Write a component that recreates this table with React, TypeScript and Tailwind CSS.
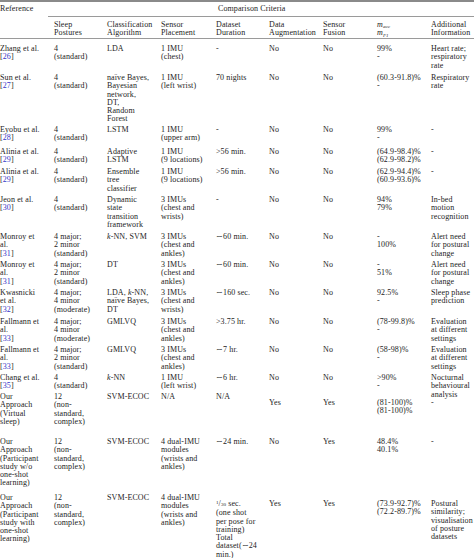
import type { ReactNode } from "react";

const cols = "grid grid-cols-[54px_53px_54px_55px_53px_54px_54px_54px_43px]";

function Cite({ n }: { n: number }) {
  return (
    <>
      [<span className="text-[#3434c8]">{n}</span>]
    </>
  );
}

const kNN = (
  <>
    <i>k</i>-NN
  </>
);

type Row = {
  h: number;
  cells: ReactNode[][];
  off?: Record<number, number>;
};

const rows: Row[] = [
  {
    h: 29,
    cells: [
      ["Zhang et al.", <Cite n={26} />],
      ["4", "(standard)"],
      ["LDA"],
      ["1 IMU", "(chest)"],
      ["-"],
      ["No"],
      ["No"],
      ["99%", "-"],
      ["Heart rate;", "respiratory", "rate"],
    ],
  },
  {
    h: 52,
    cells: [
      ["Sun et al.", <Cite n={27} />],
      ["4", "(standard)"],
      ["naïve Bayes,", "Bayesian", "network,", "DT,", "Random", "Forest"],
      ["1 IMU", "(left wrist)"],
      ["70 nights"],
      ["No"],
      ["No"],
      ["(60.3-91.8)%", "-"],
      ["Respiratory", "rate"],
    ],
  },
  {
    h: 22,
    cells: [
      ["Eyobu et al.", <Cite n={28} />],
      ["4", "(standard)"],
      ["LSTM"],
      ["1 IMU", "(upper arm)"],
      ["-"],
      ["No"],
      ["No"],
      ["99%", "-"],
      ["-"],
    ],
  },
  {
    h: 20,
    cells: [
      ["Alinia et al.", <Cite n={29} />],
      ["4", "(standard)"],
      ["Adaptive", "LSTM"],
      ["1 IMU", "(9 locations)"],
      [">56 min."],
      ["No"],
      ["No"],
      ["(64.9-98.4)%", "(62.9-98.2)%"],
      ["-"],
    ],
  },
  {
    h: 28,
    cells: [
      ["Alinia et al.", <Cite n={29} />],
      ["4", "(standard)"],
      ["Ensemble", "tree", "classifier"],
      ["1 IMU", "(9 locations)"],
      [">56 min."],
      ["No"],
      ["No"],
      ["(62.9-94.4)%", "(60.9-93.6)%"],
      ["-"],
    ],
  },
  {
    h: 37,
    cells: [
      ["Jeon et al.", <Cite n={30} />],
      ["4", "(standard)"],
      ["Dynamic", "state", "transition", "framework"],
      ["3 IMUs", "(chest and", "wrists)"],
      ["-"],
      ["No"],
      ["No"],
      ["94%", "79%"],
      ["In-bed", "motion", "recognition"],
    ],
  },
  {
    h: 28,
    cells: [
      ["Monroy et", "al.", <Cite n={31} />],
      ["4 major;", "2 minor", "(standard)"],
      [<>{kNN}, SVM</>],
      ["3 IMUs", "(chest and", "ankles)"],
      ["∼60 min."],
      ["No"],
      ["No"],
      ["-", "100%"],
      ["Alert need", "for postural", "change"],
    ],
  },
  {
    h: 28,
    cells: [
      ["Monroy et", "al.", <Cite n={31} />],
      ["4 major;", "2 minor", "(standard)"],
      ["DT"],
      ["3 IMUs", "(chest and", "ankles)"],
      ["∼60 min."],
      ["No"],
      ["No"],
      ["-", "51%"],
      ["Alert need", "for postural", "change"],
    ],
  },
  {
    h: 29,
    cells: [
      ["Kwasnicki", "et al.", <Cite n={32} />],
      ["4 major;", "4 minor", "(moderate)"],
      [<>LDA, {kNN},</>, "naïve Bayes,", "DT"],
      ["3 IMUs", "(chest and", "wrists)"],
      ["∼160 sec."],
      ["No"],
      ["No"],
      ["92.5%", "-"],
      ["Sleep phase", "prediction"],
    ],
  },
  {
    h: 28,
    cells: [
      ["Fallmann et", "al.", <Cite n={33} />],
      ["4 major;", "4 minor", "(moderate)"],
      ["GMLVQ"],
      ["3 IMUs", "(chest and", "ankles)"],
      [">3.75 hr."],
      ["No"],
      ["No"],
      ["(78-99.8)%", "-"],
      ["Evaluation", "at different", "settings"],
    ],
  },
  {
    h: 28,
    cells: [
      ["Fallmann et", "al.", <Cite n={33} />],
      ["4 major;", "2 minor", "(standard)"],
      ["GMLVQ"],
      ["3 IMUs", "(chest and", "ankles)"],
      ["∼7 hr."],
      ["No"],
      ["No"],
      ["(58-98)%", "-"],
      ["Evaluation", "at different", "settings"],
    ],
  },
  {
    h: 19,
    cells: [
      ["Chang et al.", <Cite n={35} />],
      ["4", "(standard)"],
      [kNN],
      ["1 IMU", "(left wrist)"],
      ["∼6 hr."],
      ["No"],
      ["No"],
      [">90%", "-"],
      ["Nocturnal", "behavioural", "analysis"],
    ],
  },
  {
    h: 45,
    off: { 5: 6, 6: 6, 7: 6, 8: 6 },
    cells: [
      ["Our", "Approach", "(Virtual", "sleep)"],
      ["12", "(non-", "standard,", "complex)"],
      ["SVM-ECOC"],
      ["N/A"],
      ["N/A"],
      ["Yes"],
      ["Yes"],
      ["(81-100)%", "(81-100)%"],
      ["-"],
    ],
  },
  {
    h: 56,
    cells: [
      ["Our", "Approach", "(Participant", "study w/o", "one-shot", "learning)"],
      ["12", "(non-", "standard,", "complex)"],
      ["SVM-ECOC"],
      ["4 dual-IMU", "modules", "(wrists and", "ankles)"],
      ["∼24 min."],
      ["No"],
      ["Yes"],
      ["48.4%", "40.1%"],
      ["-"],
    ],
  },
  {
    h: 62,
    off: { 4: 6, 5: 6, 6: 6, 7: 6, 8: 6 },
    cells: [
      ["Our", "Approach", "(Participant", "study with", "one-shot", "learning)"],
      ["12", "(non-", "standard,", "complex)"],
      ["SVM-ECOC"],
      ["4 dual-IMU", "modules", "(wrists and", "ankles)"],
      [
        <>
          <sup className="text-[5px]">1</sup>/<span className="text-[5px]">30</span> sec.
        </>,
        "(one shot",
        "per pose for",
        "training)",
        "Total",
        "dataset(∼24",
        "min.)",
      ],
      ["Yes"],
      ["Yes"],
      ["(73.9-92.7)%", "(72.2-89.7)%"],
      ["Postural", "similarity;", "visualisation", "of posture", "datasets"],
    ],
  },
];

export default function App() {
  return (
    <div className="w-[474px] h-[558px] overflow-hidden bg-white text-[#1c1c1c] text-[8px] leading-[8.3px] tracking-[0.1px] font-['Liberation_Serif',serif]">
      <div className="h-[2px] bg-[#8a8a8a]" />
      <div className="h-[14px] pt-[3px] flex">
        <div className="w-[54px]">Reference</div>
        <div className="pl-[164px]">Comparison Criteria</div>
      </div>
      <div className="h-px ml-[48px] bg-[#9a9a9a]" />
      <div className={`${cols} h-[21px] pt-[4px]`}>
        <div />
        <div>Sleep<br />Postures</div>
        <div>Classification<br />Algorithm</div>
        <div>Sensor<br />Placement</div>
        <div>Dataset<br />Duration</div>
        <div>Data<br />Augmentation</div>
        <div>Sensor<br />Fusion</div>
        <div>
          <i>m</i>
          <sub className="text-[5px] italic">acc</sub>
          <br />
          <i>m</i>
          <sub className="text-[5px] italic">F1</sub>
        </div>
        <div>Additional<br />Information</div>
      </div>
      <div className="h-px bg-[#9a9a9a]" />
      <div className="h-[6px]" />
      {rows.map((r, i) => (
        <div key={i} className={cols} style={{ height: r.h }}>
          {r.cells.map((c, j) => (
            <div key={j} className="whitespace-nowrap" style={{ paddingTop: r.off?.[j] ?? 0 }}>
              {c.map((line, k) => (
                <div key={k}>{line}</div>
              ))}
            </div>
          ))}
        </div>
      ))}
    </div>
  );
}
